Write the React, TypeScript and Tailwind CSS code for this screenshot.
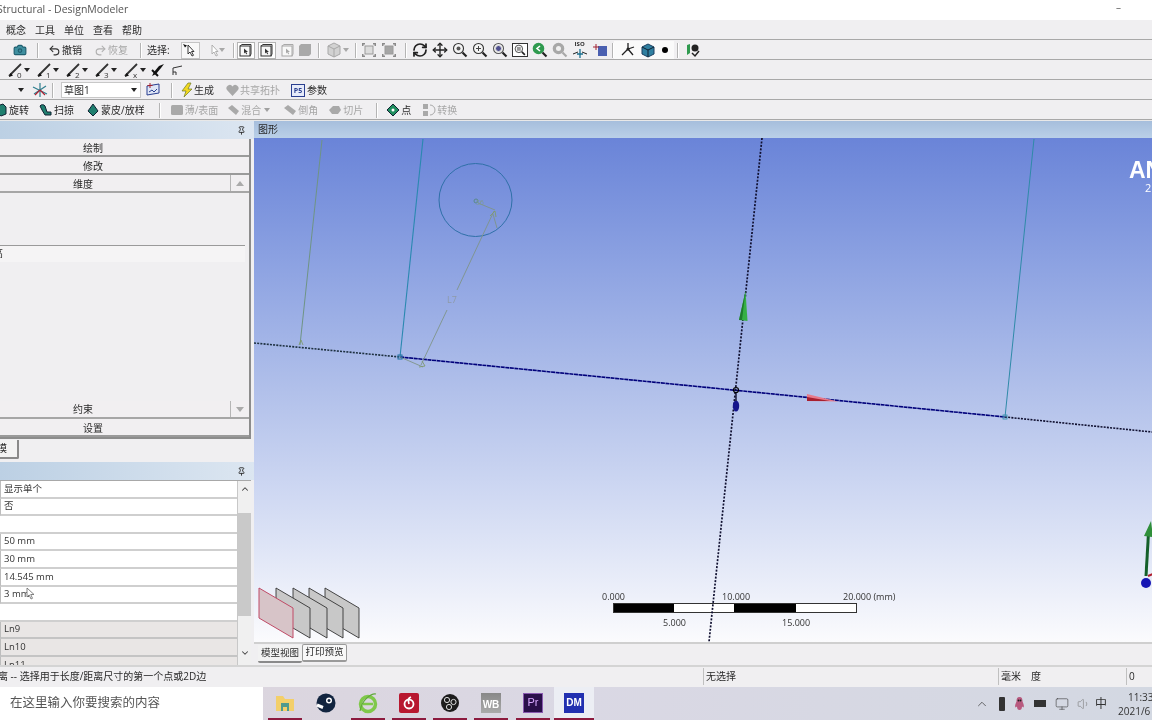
import { ReactNode } from "react";
import {
	ChevronDown,
	ChevronUp,
	Pin,
	Undo2,
	Redo2,
	Camera,
	RefreshCw,
	Move,
	Volume1,
	Monitor,
} from "lucide-react";

function Sep({ className = "" }: { className?: string }) {
	return <div className={"h-[15px] w-[2px] shrink-0 border-l border-[#b4b4b4] bg-white " + className} />;
}

function Ic({ children, w = 16, h = 16, className = "" }: { children: ReactNode; w?: number; h?: number; className?: string }) {
	return (
		<svg width={w} height={h} viewBox={`0 0 ${w} ${h}`} className={"shrink-0 " + className}>
			{children}
		</svg>
	);
}

function Caret({ color = "#222", className = "" }: { color?: string; className?: string }) {
	return (
		<Ic w={6} h={4} className={className}>
			<path d="M0 0h6L3 4z" fill={color} />
		</Ic>
	);
}

function Tool({ icon, label, off, className = "" }: { icon: ReactNode; label: string; off?: boolean; className?: string }) {
	return (
		<div className={"flex shrink-0 items-center gap-[1px] " + (off ? "text-[#a6a6a6] " : "text-[#2a2a2a] ") + className}>
			{icon}
			<span className="whitespace-nowrap">{label}</span>
		</div>
	);
}

function Lens({ color = "#333", inner, fat, className = "" }: { color?: string; inner?: ReactNode; fat?: boolean; className?: string }) {
	return (
		<Ic w={16} h={16} className={className}>
			<circle cx="6.5" cy="6.5" r="5" fill={fat ? color : "#f4f4f4"} stroke={color} strokeWidth={fat ? 1.6 : 1.1} />
			{inner}
			<path d="M10.5 10.5l4 4" stroke={color === "#a8a8a8" ? color : "#222"} strokeWidth="2.2" />
		</Ic>
	);
}

function SelectBox({ on, dim }: { on?: boolean; dim?: boolean }) {
	const c = dim ? "#a8a8a8" : "#333";
	return (
		<div className={"flex h-[17px] w-[18px] shrink-0 items-center justify-center " + (on ? "border border-[#b5b5b5] bg-white" : "")}>
			<Ic w={13} h={13}>
				<rect x="1" y="2" width="10" height="10" fill="#f8f8f8" stroke={c} />
				<path d="M1 2l2-1.5h9V10l-1 2" fill="none" stroke={c} />
				<path d="M5 4.5v5l1.2-1.2 1 2 1-.4-1-2h1.8z" fill={c} />
			</Ic>
		</div>
	);
}

function LineTool({ sub, className = "" }: { sub: string; className?: string }) {
	return (
		<div className={"relative flex h-[16px] w-[24px] shrink-0 items-center " + className}>
			<Ic w={17} h={16}>
				<path d="M1 14L13 2" stroke="#333" strokeWidth="1.8" />
				<path d="M1 15l4-1.6-2.4-2.4z" fill="#111" />
			</Ic>
			<span className="absolute bottom-[-1px] left-[9px] text-[8px] leading-none text-[#333]">{sub}</span>
			<Caret className="-ml-[1px]" />
		</div>
	);
}

function Row({ children, className = "" }: { children: ReactNode; className?: string }) {
	return (
		<div className={"flex h-[20px] shrink-0 items-center overflow-hidden border-b border-[#a8a8a8] bg-[#f0eff1] pt-[1px] text-[10px] " + className}>
			{children}
		</div>
	);
}

function PanelHead() {
	return (
		<div className="-mr-[3px] flex h-[18px] shrink-0 items-center justify-end bg-gradient-to-r from-[#bcd0e4] to-[#dce6f1] pr-[8px]">
			<Pin size={9} strokeWidth={2.5} className="text-[#333]" />
		</div>
	);
}

function Bar({ label }: { label: string }) {
	return (
		<div className="flex h-[18px] shrink-0 items-center justify-center border-b-2 border-[#9a9a9a] bg-[#f1eff1] pr-[63px] pt-[2px] text-[10px] text-[#2a2a2a]">
			{label}
		</div>
	);
}

function ScrollBar({ label, up }: { label: string; up?: boolean }) {
	return (
		<div className="flex h-[18px] shrink-0 border-b-2 border-[#a6a6a6] bg-[#f1eff1] text-[10px] text-[#2a2a2a]">
			<div className={"flex flex-1 items-center justify-center border-r border-[#b5b5b5] pr-[64px] " + (up ? "pt-[2px]" : "")}>{label}</div>
			<div className="flex w-[18px] items-center justify-center">
				{up ? (
					<Ic w={8} h={5}>
						<path d="M0 5h8L4 0z" fill="#aaa" />
					</Ic>
				) : (
					<Ic w={8} h={5}>
						<path d="M0 0h8L4 5z" fill="#aaa" />
					</Ic>
				)}
			</div>
		</div>
	);
}

function Cell({ text, gray, plain }: { text?: string; gray?: boolean; plain?: boolean }) {
	return (
		<div
			className={
				"flex h-[17.6px] shrink-0 items-center border-b-2 pl-[3px] text-[9.5px] text-[#333] " +
				(gray ? "border-[#c4c4c4] bg-[#e9e6e5] " : "border-[#cfcfcf] bg-white ") +
				(plain ? "" : "border-l border-l-[#bdbdbd]")
			}
		>
			{text}
		</div>
	);
}

function TaskIcon({ children, lit, line = true, className = "" }: { children: ReactNode; lit?: boolean; line?: boolean; className?: string }) {
	return (
		<div className={"relative flex h-[33px] shrink-0 items-center justify-center pb-[2px] " + (lit ? "w-[40px] bg-[#eceef4] " : "w-[34px] ") + className}>
			{children}
			{line && <div className="absolute inset-x-0 bottom-0 h-[2px] bg-[#8c1a3e]" />}
		</div>
	);
}

function Scale() {
	return (
		<div className="absolute left-[348px] top-[450px] h-[50px] w-[300px] text-[9px] leading-none text-[#333]">
			<span className="absolute left-0 top-[4px]">0.000</span>
			<span className="absolute left-[120px] top-[4px]">10.000</span>
			<span className="absolute left-[241px] top-[4px]">20.000 (mm)</span>
			<div className="absolute left-[11px] top-[15px] flex h-[10px] w-[244px] border border-[#333] bg-white">
				<div className="w-[60px] bg-black" />
				<div className="w-[60px]" />
				<div className="w-[62px] bg-black" />
			</div>
			<span className="absolute left-[61px] top-[30px]">5.000</span>
			<span className="absolute left-[180px] top-[30px]">15.000</span>
		</div>
	);
}

function Viewport() {
	return (
		<div className="relative flex-1 overflow-hidden bg-gradient-to-b from-[#6a84d8] via-[#b1c0ea] via-50% to-[#fbfbfd]">
			<Scale />
			<svg viewBox="254 138 898 504" width="898" height="504" className="absolute inset-0">
				<path d="M254 343L400 357" stroke="#1d3040" strokeWidth="1.6" strokeDasharray="2 1.2" fill="none" />
				<path d="M400 357L1005 417" stroke="#00007a" strokeWidth="1.6" strokeDasharray="4 0.6" fill="none" />
				<path d="M1005 417L1152 432" stroke="#101030" strokeWidth="1.6" strokeDasharray="2 1.2" fill="none" />
				<path d="M762 138L709 642" stroke="#101030" strokeWidth="1.7" strokeDasharray="2 1.5" fill="none" />
				<path d="M322 140L300 345" stroke="#6f9484" strokeWidth="1" fill="none" />
				<path d="M423 139L400 357" stroke="#2a88b0" strokeWidth="1.1" fill="none" />
				<path d="M1034 139L1005 417" stroke="#2f8aa8" strokeWidth="1" fill="none" />
				<circle cx="475.5" cy="200" r="36.5" fill="none" stroke="#2f70a8" strokeWidth="1" />
				<path d="M421 365L447 310M457 290L494 211M400 357L423 367M478 203L495 210M493 214L497 228" stroke="#7f9488" strokeWidth="0.9" fill="none" />
				<path d="M299 345l2-5 2 5M419 367l6-1-3-5M490 216l5-5 1 6" stroke="#7f9a70" strokeWidth="0.9" fill="none" />
				<rect x="398" y="355" width="4" height="4" fill="none" stroke="#1d6fa0" />
				<rect x="1003" y="415" width="4" height="4" fill="none" stroke="#2f8aa8" strokeWidth="0.8" />
				<circle cx="476" cy="201" r="2" fill="none" stroke="#5a8a8a" />
				<path d="M745.5 291L739 320L747.5 321z" fill="#35b045" />
				<path d="M745.5 291L739 320L742 320z" fill="#1d7c2c" />
				<path d="M807 394L838 401.5L807 401z" fill="#e87a8a" />
				<path d="M807 397L830 401L807 401z" fill="#a81f2f" />
				<ellipse cx="736" cy="406" rx="3.2" ry="5.5" fill="#14148c" />
				<path d="M736 392V401" stroke="#101030" strokeWidth="1.4" />
				<circle cx="736" cy="390" r="2.5" fill="none" stroke="#000" strokeWidth="1.2" />
				{[325, 309, 293, 276].map((x) => (
					<path key={x} d={`M${x} 588L${x + 34} 608V638L${x} 618z`} fill="#c8c8c8" stroke="#333" strokeWidth="0.9" />
				))}
				<path d="M259 588L293 608V638L259 618z" fill="#d7c4c8" stroke="#c04a66" strokeWidth="1" />
				<path d="M1146 576L1148.5 533" stroke="#15602a" strokeWidth="3" />
				<path d="M1144 536L1151 521L1153 537z" fill="#2f8f3a" />
				<path d="M1148 576L1153 574" stroke="#b02030" strokeWidth="2" />
				<circle cx="1146" cy="583" r="5" fill="#1616b4" />
			</svg>
			<span className="absolute left-[193px] top-[157px] text-[9px] leading-none text-[#8d9aa8]">L7</span>
			<span className="absolute left-[222px] top-[61px] text-[7px] leading-none text-[#7f9a90]">S6</span>
			<span className="absolute left-[875px] top-[22px] font-['Liberation_Sans',sans-serif] text-[23px] font-bold leading-[20px] text-white">AN</span>
			<span className="absolute left-[891px] top-[44px] text-[11px] leading-none text-white">2</span>
		</div>
	);
}

export default function App() {
	return (
		<div className="flex h-[720px] w-[1152px] flex-col overflow-hidden bg-[#f0eff1] font-['Open_Sans','Noto_Sans_CJK_SC',sans-serif] text-[#2a2a2a] blur-[0.45px]">
			{/* title */}
			<div className="flex h-[20px] shrink-0 items-center justify-between bg-white pr-[31px]">
				<span className="-ml-[3px] text-[10.5px] text-[#555]">Structural - DesignModeler</span>
				<span className="mb-[6px] text-[10px] text-[#666]">–</span>
			</div>

			{/* menu */}
			<div className="flex h-[20px] shrink-0 items-center gap-[9px] border-b border-[#a8a8a8] bg-[#f0eff1] pl-[6px] pt-[1px] text-[10px]">
				<span>概念</span>
				<span>工具</span>
				<span>单位</span>
				<span>查看</span>
				<span>帮助</span>
			</div>

			<Row>
				<Camera size={14} className="ml-[13px] shrink-0 fill-[#3f8f9f] text-[#1f5f70]" />
				<Sep className="ml-[10px]" />
				<Tool className="ml-[9px]" icon={<Undo2 size={13} strokeWidth={2} className="text-[#333]" />} label="撤销" />
				<Tool off className="ml-[12px]" icon={<Redo2 size={13} strokeWidth={2} className="text-[#b0b0b0]" />} label="恢复" />
				<Sep className="ml-[12px]" />
				<span className="ml-[5px] whitespace-nowrap">选择:</span>
				<div className="ml-[11px] flex h-[17px] w-[19px] shrink-0 items-center justify-center border border-[#c4c4c4] bg-[#f8f8f8]">
					<Ic w={14} h={14}>
						<path d="M5 2v9l2-2 2 4 1.5-.7-2-3.8H11z" fill="#fff" stroke="#222" strokeWidth="0.9" />
						<path d="M0 1l4 1.5-2 2z" fill="#111" />
					</Ic>
				</div>
				<div className="ml-[7px] flex w-[19px] shrink-0 items-center">
					<Ic w={12} h={14}>
						<path d="M5 2v9l2-2 2 4 1.5-.7-2-3.8H11z" fill="#fff" stroke="#a8a8a8" strokeWidth="0.9" />
					</Ic>
					<Caret color="#a8a8a8" />
				</div>
				<Sep className="ml-[7px]" />
				<div className="ml-[2px] flex gap-[3px]">
					<SelectBox on />
					<SelectBox on />
				</div>
				<div className="ml-[3px] flex gap-0">
					<SelectBox dim />
					<Ic w={16} h={16}>
						<path d="M2 4l2-2h10v10l-2 2H2z" fill="#a9a9a9" />
					</Ic>
				</div>
				<Sep className="ml-[5px]" />
				<div className="ml-[6px] flex w-[24px] shrink-0 items-center gap-[1px]">
					<Ic w={16} h={16}>
						<path d="M8 1l6 3v8l-6 3-6-3V4z" fill="#d2d2d2" stroke="#a8a8a8" />
						<path d="M2 4l6 3 6-3M8 7v8" fill="none" stroke="#a8a8a8" />
					</Ic>
					<Caret color="#a8a8a8" />
				</div>
				<Sep className="ml-[5px]" />
				<div className="ml-[4px] flex gap-[4px]">
					{[0, 1].map((i) => (
						<Ic key={i} w={16} h={16}>
							<rect x="4" y="4" width="8" height="8" fill={i ? "#a5a5a5" : "#dcdcdc"} stroke="#9a9a9a" />
							<path d="M1 1h3v1.5H2.5V4H1zM15 1v3h-1.5V2.5H12V1zM1 15v-3h1.5v1.5H4V15zM15 15h-3v-1.5h1.5V12H15z" fill="#8a8a8a" />
						</Ic>
					))}
				</div>
				<Sep className="ml-[8px]" />
				<div className="ml-[5px] flex items-center gap-[4px]">
					<RefreshCw size={16} strokeWidth={2.6} className="text-[#222]" />
					<Move size={16} strokeWidth={2} className="text-[#222]" />
					<Lens inner={<circle cx="6.5" cy="6.5" r="2" fill="#555" />} />
					<Lens inner={<path d="M4 6.5h5M6.5 4v5" stroke="#444" />} />
					<Lens color="#555" inner={<circle cx="6.5" cy="6.5" r="3" fill="#4f4f8f" stroke="#ddd" />} />
					<div className="flex h-[14px] w-[16px] items-center justify-center border border-[#333] bg-white">
						<Lens className="scale-75" inner={<rect x="4" y="4" width="5" height="5" fill="#999" />} />
					</div>
					<Lens color="#2f9a4f" fat inner={<path d="M8 4L5 6.5 8 9" stroke="#fff" strokeWidth="1.6" fill="none" />} />
					<Lens color="#a8a8a8" fat inner={<circle cx="6.5" cy="6.5" r="2.5" fill="#f0f0f0" />} />
					<div className="relative flex h-[16px] w-[16px] items-center justify-center">
						<span className="absolute top-[-1px] text-[6px] font-bold leading-none">ISO</span>
						<Ic w={16} h={9} className="mt-[7px]">
							<path d="M1 5l5-2M15 5l-5-2" stroke="#222" />
							<path d="M8 0v9M5 5h6" stroke="#1a6f8f" strokeWidth="1.3" />
						</Ic>
					</div>
					<Ic w={16} h={16}>
						<rect x="6" y="4" width="9" height="10" fill="#4a5fb0" />
						<path d="M1 5h6M4 2v6" stroke="#a02030" strokeWidth="1" />
					</Ic>
				</div>
				<Sep className="ml-[4px]" />
				<div className="flex h-[19px] items-center gap-0 bg-[#fafafa] px-[1px]">
					<Ic w={16} h={16} className="ml-[5px]">
						<path d="M8 1v5M8 7L2 13M8 7l5 6M8 7L14 5" stroke="#222" strokeWidth="1.3" fill="none" />
						<circle cx="8" cy="7" r="1.5" fill="#222" />
					</Ic>
					<Ic w={16} h={16} className="ml-[4px]">
						<path d="M8 2l6 3v7l-6 3-6-3V5z" fill="#2f7fa0" stroke="#1a3f60" />
						<path d="M2 5l6 3 6-3M8 8v7" fill="none" stroke="#123" />
					</Ic>
					<div className="ml-[1px] flex w-[16px] items-center justify-center">
						<div className="h-[6px] w-[6px] rounded-full bg-black" />
					</div>
				</div>
				<Sep className="ml-[3px]" />
				<Ic w={18} h={16} className="ml-[5px]">
					<path d="M3 3l3-1v9l-3 2z" fill="#2f9a4f" />
					<circle cx="11" cy="6" r="3.5" fill="#222" />
					<path d="M8 11l3 3 4-5" stroke="#222" strokeWidth="1.5" fill="none" />
				</Ic>
			</Row>

			<Row>
				<LineTool sub="0" className="ml-[8px]" />
				<LineTool sub="1" className="ml-[5px]" />
				<LineTool sub="2" className="ml-[5px]" />
				<LineTool sub="3" className="ml-[5px]" />
				<LineTool sub="x" className="ml-[5px]" />
				<Ic w={14} h={14} className="ml-[3px]">
					<path d="M13 1L8 3 3 9l-2 4 4-2 5-6z" fill="#111" />
					<path d="M1 7l6 6" stroke="#111" strokeWidth="2" />
				</Ic>
				<Ic w={12} h={12} className="ml-[6px]">
					<path d="M2 11V4l9-2M2 8h3v3" stroke="#333" fill="none" />
				</Ic>
			</Row>

			<Row>
				<Caret className="ml-[18px]" />
				<Ic w={16} h={16} className="ml-[8px]">
					<path d="M8 1v14M1 5l14 7M2 12l12-8" stroke="#2f7f8f" strokeWidth="1.2" />
					<path d="M8 8l-5 5M8 8l5 5" stroke="#b02030" strokeWidth="1.2" />
				</Ic>
				<Sep className="ml-[4px]" />
				<div className="ml-[7px] flex h-[16px] w-[80px] shrink-0 items-center justify-between border border-[#c8c8c8] bg-white pl-[2px] pr-[3px]">
					<span>草图1</span>
					<Caret />
				</div>
				<Ic w={16} h={16} className="ml-[4px]">
					<path d="M2 4l12-2v9L2 13z" fill="#dfe6f6" stroke="#2a3f90" />
					<path d="M5 1v5M2.5 3.5h5" stroke="#a02030" />
					<path d="M4 10l3-2 2 2 3-3" stroke="#2a3f90" fill="none" />
				</Ic>
				<Sep className="ml-[10px]" />
				<Tool
					className="ml-[7px]"
					icon={
						<Ic w={13} h={16}>
							<path d="M8 1L2 9h4l-2 6 8-8H8l3-6z" fill="#f2d81f" stroke="#6f7a20" strokeWidth="0.7" />
						</Ic>
					}
					label="生成"
				/>
				<Tool
					off
					className="ml-[12px]"
					icon={
						<Ic w={13} h={14}>
							<path d="M6.5 13L1 7a3.2 3.2 0 0 1 5.5-3.5A3.2 3.2 0 0 1 12 7z" fill="#a8a8a8" />
						</Ic>
					}
					label="共享拓扑"
				/>
				<Tool
					className="ml-[11px]"
					icon={
						<div className="mr-[1px] flex h-[13px] w-[14px] items-center justify-center border border-[#2a3f90] bg-[#e6ebfa] text-[7px] font-bold leading-none text-[#2a3f90]">
							P5
						</div>
					}
					label="参数"
				/>
			</Row>

			<Row>
				<Tool
					className="-ml-[5px]"
					icon={
						<Ic w={13} h={14}>
							<path d="M2 3l6-2 3 3v7l-5 2-4-3z" fill="#1f7f6f" stroke="#123" />
						</Ic>
					}
					label="旋转"
				/>
				<Tool
					className="ml-[10px]"
					icon={
						<Ic w={14} h={14}>
							<path d="M1 3a3 3 0 0 1 5 0l2 6h4v3H6L3 7z" fill="#1f7f6f" stroke="#123" />
						</Ic>
					}
					label="扫掠"
				/>
				<Tool
					className="ml-[12px]"
					icon={
						<Ic w={14} h={14}>
							<path d="M7 1l5 7-5 5-5-5z" fill="#1f7f6f" stroke="#123" />
						</Ic>
					}
					label="蒙皮/放样"
				/>
				<Sep className="ml-[14px]" />
				<Tool
					off
					className="ml-[9px]"
					icon={
						<Ic w={14} h={14}>
							<rect x="1" y="2" width="12" height="10" rx="1.5" fill="#a9a9a9" />
						</Ic>
					}
					label="薄/表面"
				/>
				<div className="ml-[9px] flex shrink-0 items-center gap-[3px]">
					<Tool
						off
						icon={
							<Ic w={13} h={14}>
								<path d="M1 5l4-3 7 6-3 4z" fill="#a9a9a9" />
							</Ic>
						}
						label="混合"
					/>
					<Caret color="#a0a0a0" />
				</div>
				<Tool
					off
					className="ml-[13px]"
					icon={
						<Ic w={14} h={14}>
							<path d="M1 5l4-3 8 6-3 4z" fill="#a9a9a9" />
						</Ic>
					}
					label="倒角"
				/>
				<Tool
					off
					className="ml-[10px]"
					icon={
						<Ic w={14} h={14}>
							<path d="M1 7l4-4h6l2 4-3 4H4z" fill="#a9a9a9" />
						</Ic>
					}
					label="切片"
				/>
				<Sep className="ml-[13px]" />
				<Tool
					className="ml-[8px]"
					icon={
						<Ic w={14} h={14}>
							<path d="M7 1l6 6-6 6-6-6z" fill="#1f8f5f" stroke="#123" />
							<circle cx="7" cy="7" r="1.5" fill="#fff" />
						</Ic>
					}
					label="点"
				/>
				<Tool
					off
					className="ml-[11px]"
					icon={
						<Ic w={14} h={14}>
							<path d="M1 1h5v5H1zM1 8h5v5H1z" fill="#a9a9a9" />
							<path d="M8 2a5 5 0 0 1 0 10" stroke="#a9a9a9" fill="none" />
						</Ic>
					}
					label="转换"
				/>
			</Row>

			{/* main */}
			<div className="flex min-h-0 flex-1 border-t border-[#e8e8e8]">
				<div className="flex w-[251px] shrink-0 flex-col">
					<PanelHead />
					<div className="flex h-[300px] shrink-0 flex-col border-b-2 border-r-2 border-[#8c8c8c]">
						<Bar label="绘制" />
						<Bar label="修改" />
						<ScrollBar label="维度" up />
						<div className="flex-1 pr-[4px] pt-[52px]">
							<div className="h-[17px] overflow-hidden border-t border-[#9a9a9a] bg-[#f5f4f5] text-[10px] leading-[15px]">
								<span className="-ml-[7px] block">高</span>
							</div>
						</div>
						<ScrollBar label="约束" />
						<Bar label="设置" />
					</div>
					<div className="h-[23px] shrink-0 pt-[1px]">
						<div className="flex h-[19px] w-[19px] items-center overflow-hidden rounded-br-[2px] border-b-2 border-r-2 border-[#8a8a8a] bg-[#f3f3f3] text-[10px]">
							<span className="-ml-[3px]">模</span>
						</div>
					</div>
					<PanelHead />
					<div className="flex min-h-0 flex-1 overflow-hidden border-t border-[#a8a8a8] bg-white">
						<div className="relative flex min-w-0 flex-1 flex-col overflow-hidden">
							<Cell text="显示单个" />
							<Cell text="否" />
							<Cell plain />
							<Cell text="50 mm" />
							<Cell text="30 mm" />
							<Cell text="14.545 mm" />
							<Cell text="3 mm" />
							<Cell plain />
							<Cell text="Ln9" gray />
							<Cell text="Ln10" gray />
							<Cell text="Ln11" gray />
							<svg width="12" height="14" viewBox="0 0 12 14" className="absolute left-[26px] top-[106px]">
								<path d="M1 1v9l2.2-2 1.8 4 1.5-.7-1.8-3.8H8z" fill="#fff" stroke="#666" strokeWidth="0.8" />
							</svg>
						</div>
						<div className="flex w-[14px] shrink-0 flex-col items-center border-l border-[#c8c8c8] bg-[#f0f0f0]">
							<ChevronUp size={10} strokeWidth={2.5} className="mt-[3px] shrink-0 text-[#444]" />
							<div className="mt-[19px] h-[103px] w-full shrink-0 bg-[#c9c9c9]" />
							<ChevronDown size={10} strokeWidth={2.5} className="mt-[32px] shrink-0 text-[#444]" />
						</div>
					</div>
				</div>

				<div className="ml-[3px] flex min-w-0 flex-1 flex-col">
					<div className="flex h-[17px] shrink-0 items-center bg-gradient-to-b from-[#a6bedc] to-[#bad0e8] pl-[4px] text-[10px]">图形</div>
					<Viewport />
					<div className="flex h-[23px] shrink-0 items-start gap-0 border-t-2 border-[#cfcfcf] bg-[#f0eff1] pl-[4px] text-[9.5px]">
						<div className="mt-[1px] flex h-[18px] w-[44px] items-center justify-center rounded-b-[2px] border-b-2 border-[#8a8a8a] bg-[#f2f2f2]">模型视图</div>
						<div className="flex h-[18px] w-[45px] items-center justify-center rounded-[2px] border border-b-2 border-[#9a9a9a] bg-[#f8f8f8]">打印预览</div>
					</div>
				</div>
			</div>

			{/* status */}
			<div className="flex h-[22px] shrink-0 items-center border-t-2 border-[#d4d4d4] bg-[#f0eff1] pb-[1px] text-[10px]">
				<div className="-ml-[2px] flex w-[706px] shrink-0 items-center overflow-hidden whitespace-nowrap border-r border-[#c0c0c0] leading-[17px]">离 -- 选择用于长度/距离尺寸的第一个点或2D边</div>
				<div className="flex w-[295px] shrink-0 items-center border-r border-[#c0c0c0] pl-[2px] leading-[17px]">无选择</div>
				<div className="flex w-[128px] shrink-0 items-center gap-[10px] border-r border-[#c0c0c0] pl-[2px] leading-[17px]">
					<span>毫米</span>
					<span>度</span>
				</div>
				<div className="pl-[2px] leading-[17px]">0</div>
			</div>

			{/* taskbar */}
			<div className="flex h-[33px] shrink-0 items-center bg-gradient-to-r from-[#dcd3da] via-[#dad8e4] to-[#d3d8e2]">
				<div className="flex h-full w-[263px] shrink-0 items-center bg-white pl-[10px] text-[12.5px] text-[#555]">在这里输入你要搜索的内容</div>
				<div className="ml-[5px] flex shrink-0 items-center">
					<TaskIcon>
						<Ic w={20} h={18}>
							<path d="M1 2h7l2 3h9v12H1z" fill="#f3cf6a" />
							<path d="M6 9h8v8h-2v-4H8v4H6z" fill="#4f9a8f" />
						</Ic>
					</TaskIcon>
					<TaskIcon line={false} className="ml-[7px]">
						<Ic w={20} h={20}>
							<circle cx="10" cy="10" r="9.5" fill="#12243f" />
							<circle cx="13" cy="7.5" r="3" fill="#fff" />
							<circle cx="13" cy="7.5" r="1.5" fill="#12243f" />
							<path d="M1 12l6 2.5" stroke="#fff" strokeWidth="3" />
						</Ic>
					</TaskIcon>
					<TaskIcon className="ml-[8px]">
						<Ic w={20} h={22}>
							<circle cx="10" cy="12" r="7.5" fill="none" stroke="#7fc84a" strokeWidth="3.5" />
							<path d="M5 12h10" stroke="#7fc84a" strokeWidth="2.5" />
							<path d="M2 19C4 7 14 1 18 2" stroke="#5fa83a" strokeWidth="1.2" fill="none" />
						</Ic>
					</TaskIcon>
					<TaskIcon className="ml-[7px]">
						<div className="flex h-[20px] w-[20px] items-center justify-center rounded-[2px] bg-[#b81830]">
							<Ic w={14} h={14}>
								<circle cx="7" cy="8" r="4.5" fill="none" stroke="#fff" strokeWidth="1.8" />
								<path d="M9 1C6 2 6 5 7 8" stroke="#fff" strokeWidth="1.8" fill="none" />
							</Ic>
						</div>
					</TaskIcon>
					<TaskIcon className="ml-[7px]">
						<Ic w={20} h={20}>
							<circle cx="10" cy="10" r="9" fill="#1c1c1c" />
							<circle cx="7" cy="7" r="2.6" fill="none" stroke="#ddd" />
							<circle cx="13.5" cy="9" r="2.6" fill="none" stroke="#ddd" />
							<circle cx="9" cy="14" r="2.6" fill="none" stroke="#ddd" />
						</Ic>
					</TaskIcon>
					<TaskIcon className="ml-[7px]">
						<div className="flex h-[20px] w-[20px] items-center justify-center bg-gradient-to-b from-[#888] to-[#aaa] pt-[4px] font-['Liberation_Sans',sans-serif] text-[10px] font-bold leading-none text-white">WB</div>
					</TaskIcon>
					<TaskIcon className="ml-[8px]">
						<div className="flex h-[20px] w-[20px] items-center justify-center border border-[#8a5ab0] bg-[#2a0f4a] font-['Liberation_Sans',sans-serif] text-[11px] leading-none text-[#d8a8ff]">Pr</div>
					</TaskIcon>
					<TaskIcon lit className="ml-[4px]">
						<div className="flex h-[20px] w-[20px] items-center justify-center bg-[#2230b0] font-['Liberation_Sans',sans-serif] text-[10px] font-bold leading-none text-white">DM</div>
					</TaskIcon>
				</div>
				<div className="ml-[381px] flex shrink-0 items-center text-[#333]">
					<ChevronUp size={14} strokeWidth={1.2} />
					<div className="ml-[10px] h-[14px] w-[6px] rounded-[1px] bg-[#333]" />
					<Ic w={11} h={15} className="ml-[9px]">
						<path d="M5.5 1C3 1 2.5 3 2.5 5.5 1.5 8 0.5 10 1.5 11.5L3 10.5C3 13 4 14 5.500 14S8 13 8 10.500L9.500 11.500C10.500 10 9.500 8 8.500 5.500 8.500 3 8 1 5.500 1z" fill="#b85a7f" />
						<circle cx="4.5" cy="4.5" r="0.9" fill="#222" />
						<circle cx="6.5" cy="4.5" r="0.9" fill="#222" />
					</Ic>
					<div className="ml-[9px] h-[7px] w-[12px] bg-[#333]" />
					<Monitor size={14} strokeWidth={1} className="ml-[9px]" />
					<Volume1 size={14} strokeWidth={1} className="ml-[8px] text-[#777]" />
					<span className="ml-[4px] text-[12px]">中</span>
					<div className="ml-[11px] flex w-[40px] shrink-0 flex-col whitespace-nowrap text-[10px] leading-[14px]">
						<span className="ml-[10px]">11:33</span>
						<span>2021/6</span>
					</div>
				</div>
			</div>
		</div>
	);
}
